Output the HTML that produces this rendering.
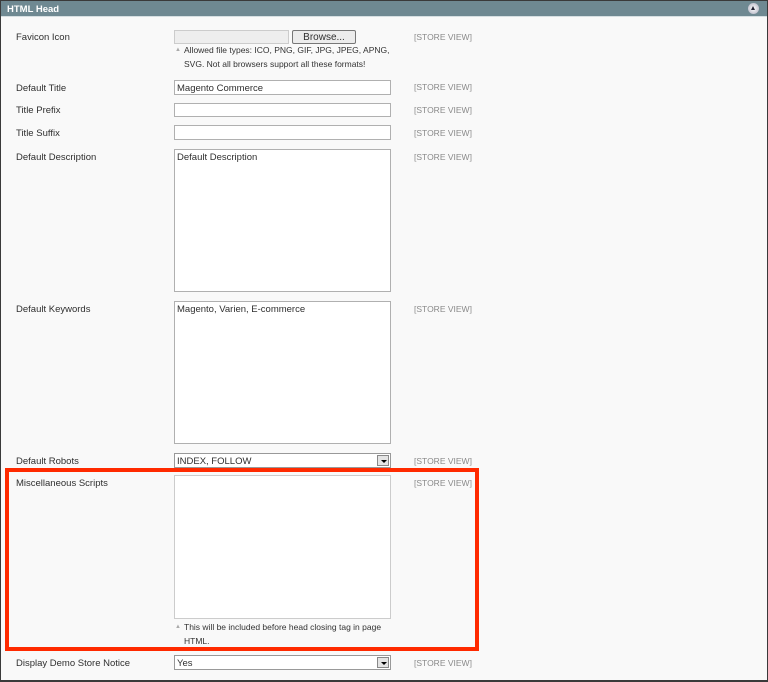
<!DOCTYPE html>
<html><head><style>
*{margin:0;padding:0;box-sizing:border-box}
body{width:768px;height:682px;background:#3a3a3a;font-family:"Liberation Sans",Arial,sans-serif;font-size:9.5px;color:#2f2f2f;position:relative;overflow:hidden}
#p{position:absolute;left:1px;top:1px;width:766px;height:679px;background:#f9f9f9}
#h{position:absolute;left:1px;top:1px;width:766px;height:16px;background:#6f8992;border-bottom:1px solid #d6dfe2;color:#fff;font-weight:bold;font-size:9.5px;padding:3px 0 0 6px}
.a{position:absolute}
.l{position:absolute;left:16px}
.s{position:absolute;left:414px;color:#8a8a8a;font-size:8.5px}
.i{position:absolute;left:174px;width:217px;background:#fff;border:1px solid #b0b0b0;padding:2px 2px 0;font-size:9.5px}
.n{position:absolute;left:184px;font-size:8.5px;color:#333}
.tri{position:absolute;left:175px;font-size:6px;color:#aaa}
.arr{position:absolute;right:1px;top:1px;width:12px;height:11px;background:#e4e4e4;border:1px solid #888}
.arr:after{content:"";position:absolute;left:3px;top:4px;border-left:3px solid transparent;border-right:3px solid transparent;border-top:3px solid #000}
</style></head><body>
<div id="p"></div>
<div id="h">HTML Head</div>
<div class="a" style="left:748px;top:3px;width:11px;height:11px;border-radius:50%;background:radial-gradient(#fff,#aab);"></div>
<div class="a" style="left:751px;top:6px;border-left:2.5px solid transparent;border-right:2.5px solid transparent;border-bottom:4px solid #223"></div>

<div class="l" style="top:32px">Favicon Icon</div>
<div class="a" style="left:174px;top:30px;width:115px;height:14px;background:#eee;border:1px solid #ccc"></div>
<div class="a" style="left:292px;top:30px;width:64px;height:14px;background:#ececec;border:1px solid #777;border-radius:2px;font-size:10px;text-align:center;line-height:13px">Browse...</div>
<div class="tri" style="top:47px">▲</div>
<div class="n" style="top:45px">Allowed file types: ICO, PNG, GIF, JPG, JPEG, APNG,</div>
<div class="n" style="top:59px">SVG. Not all browsers support all these formats!</div>
<div class="s" style="top:32px">[STORE VIEW]</div>

<div class="l" style="top:83px">Default Title</div>
<div class="i" style="top:80px;height:15px">Magento Commerce</div>
<div class="s" style="top:82px">[STORE VIEW]</div>

<div class="l" style="top:105px">Title Prefix</div>
<div class="i" style="top:103px;height:14px"></div>
<div class="s" style="top:105px">[STORE VIEW]</div>

<div class="l" style="top:128px">Title Suffix</div>
<div class="i" style="top:125px;height:15px"></div>
<div class="s" style="top:128px">[STORE VIEW]</div>

<div class="l" style="top:152px">Default Description</div>
<div class="i" style="top:149px;height:143px">Default Description</div>
<div class="s" style="top:152px">[STORE VIEW]</div>

<div class="l" style="top:304px">Default Keywords</div>
<div class="i" style="top:301px;height:143px">Magento, Varien, E-commerce</div>
<div class="s" style="top:304px">[STORE VIEW]</div>

<div class="l" style="top:456px">Default Robots</div>
<div class="i" style="top:453px;height:15px;border-color:#999">INDEX, FOLLOW<span class="arr"></span></div>
<div class="s" style="top:456px">[STORE VIEW]</div>

<div class="l" style="top:478px">Miscellaneous Scripts</div>
<div class="i" style="top:475px;height:144px;border-color:#ccc"></div>
<div class="s" style="top:478px">[STORE VIEW]</div>
<div class="tri" style="top:624px">▲</div>
<div class="n" style="top:622px">This will be included before head closing tag in page</div>
<div class="n" style="top:636px">HTML.</div>
<div class="a" style="left:5px;top:468px;width:474px;height:183px;border:4px solid #ff2a00"></div>

<div class="l" style="top:658px">Display Demo Store Notice</div>
<div class="i" style="top:655px;height:15px;border-color:#999">Yes<span class="arr"></span></div>
<div class="s" style="top:658px">[STORE VIEW]</div>
</body></html>
